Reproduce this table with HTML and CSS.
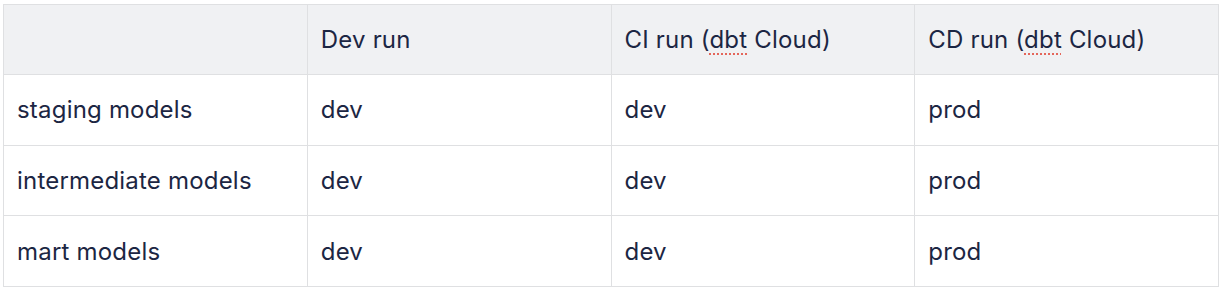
FILE: index.html
```html
<!DOCTYPE html>
<html>
<head>
<meta charset="utf-8">
<link rel="stylesheet" href="styles.css">
</head>
<body>
<table class="env-table">
  <thead>
    <tr>
      <th></th>
      <th>Dev run</th>
      <th>CI run (<span class="spell">dbt</span> Cloud)</th>
      <th>CD run (<span class="spell">dbt</span> Cloud)</th>
    </tr>
  </thead>
  <tbody>
    <tr><td>staging models</td><td>dev</td><td>dev</td><td>prod</td></tr>
    <tr><td>intermediate models</td><td>dev</td><td>dev</td><td>prod</td></tr>
    <tr><td>mart models</td><td>dev</td><td>dev</td><td>prod</td></tr>
  </tbody>
</table>
</body>
</html>
```
FILE: styles.css
```css
html, body {
  margin: 0;
  padding: 0;
  background: #ffffff;
}
body {
  padding: 4px 0 0 3px;
  font-family: Inter, "Noto Sans", sans-serif;
  color: #1c2643;
}
.env-table {
  border-collapse: collapse;
  width: 1216px;
  table-layout: fixed;
  font-size: 24px;
  letter-spacing: 0.2px;
}
.env-table th,
.env-table td {
  border: 1px solid #dfe0e2;
  padding: 0 13px;
  text-align: left;
  font-weight: 400;
  height: 69.67px;
  vertical-align: middle;
}
.env-table thead th {
  background: #f0f1f3;
  height: 69px;
}
.spell {
  text-decoration: underline dotted #e4665a;
  text-decoration-thickness: 2px;
  text-underline-offset: 5px;
}
```
